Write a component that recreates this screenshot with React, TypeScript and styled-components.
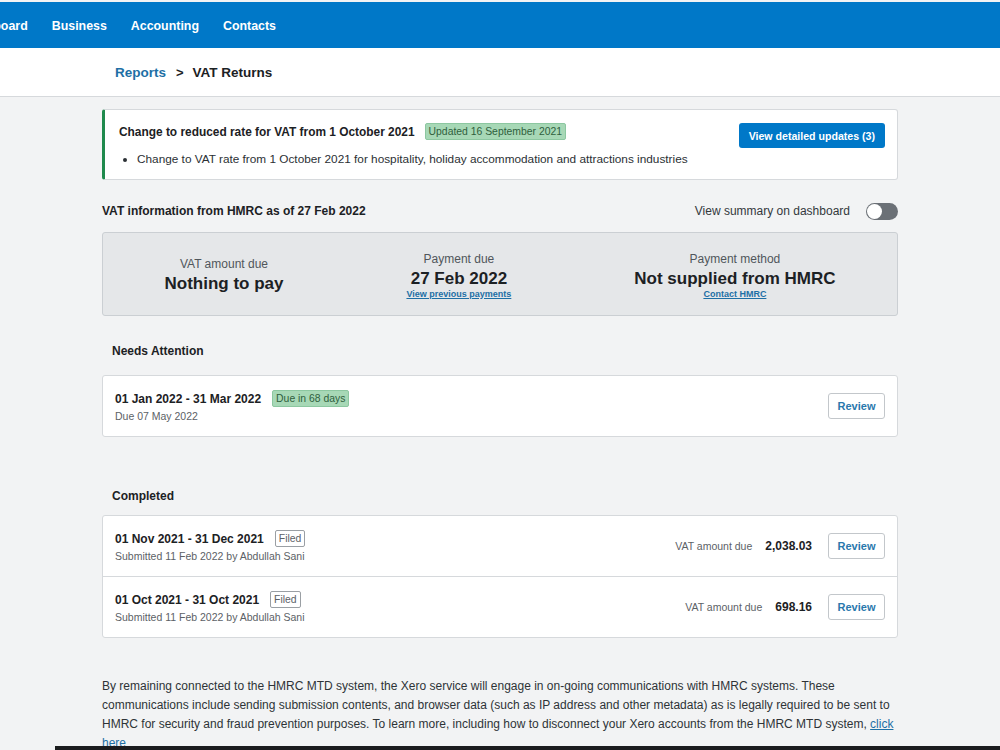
import React from 'react';
import styled, { createGlobalStyle } from 'styled-components';

const GlobalStyle = createGlobalStyle`
  html, body {
    margin: 0;
    padding: 0;
    background: #f2f3f4;
    font-family: "Liberation Sans", Arial, sans-serif;
    color: #1c2124;
    overflow: hidden;
  }
`;

const S = {
  Page: styled.div`
    min-height: 750px;
    padding-top: 2px;
    background: #f2f3f4;
  `,
  Nav: styled.nav`
    display: flex;
    align-items: center;
    gap: 24px;
    height: 46px;
    margin-left: -37px;
    background: #0078c8;
  `,
  NavItem: styled.a`
    color: #ffffff;
    font-size: 12.4px;
    font-weight: 700;
    text-decoration: none;
    padding-top: 1px;
  `,
  Crumbs: styled.div`
    display: flex;
    align-items: center;
    height: 48px;
    padding-left: 115px;
    background: #ffffff;
    border-bottom: 1px solid #d6d9dc;
    font-size: 13.5px;
    font-weight: 700;

    .link {
      color: #1d6fa5;
    }
    .sep {
      margin: 0 9px 0 10px;
      font-size: 13px;
    }
  `,
  Main: styled.main`
    width: 796px;
    margin: 0 auto;
    padding-top: 12px;
  `,
  Notice: styled.section`
    display: flex;
    justify-content: space-between;
    align-items: flex-start;
    background: #ffffff;
    border: 1px solid #d6d9dc;
    border-left: 3px solid #1f8a4d;
    border-radius: 3px;
    padding: 13px 12px 13px 14px;
  `,
  NoticeTitle: styled.div`
    display: flex;
    align-items: center;
    gap: 10px;
    font-size: 11.9px;
    font-weight: 700;
  `,
  NoticeList: styled.ul`
    margin: 12px 0 0;
    padding-left: 18px;
    font-size: 11.8px;
    color: #2b3034;
  `,
  Tag: styled.span<{ $outline?: boolean }>`
    display: inline-block;
    font-size: 10.4px;
    font-weight: 400;
    line-height: 13px;
    padding: 1px 3px;
    border-radius: 2px;
    color: ${(p) => (p.$outline ? '#5c6166' : '#2f5f3d')};
    background: ${(p) => (p.$outline ? '#ffffff' : '#a7d8b6')};
    border: 1px solid ${(p) => (p.$outline ? '#9a9fa4' : '#8cc7a0')};
  `,
  PrimaryButton: styled.button`
    background: #0078c8;
    color: #ffffff;
    border: none;
    border-radius: 3px;
    font-family: inherit;
    font-size: 10.6px;
    font-weight: 700;
    height: 25px;
    padding: 0 10px;
  `,
  InfoHeader: styled.div`
    display: flex;
    justify-content: space-between;
    align-items: center;
    margin-top: 21px;
    height: 20px;
    font-size: 12px;
    font-weight: 700;
  `,
  ToggleWrap: styled.label`
    display: flex;
    align-items: center;
    gap: 16px;
    font-size: 12px;
    font-weight: 400;
    color: #33383c;
  `,
  Toggle: styled.span`
    position: relative;
    width: 32px;
    height: 17px;
    border-radius: 9px;
    background: #6b7076;

    &::after {
      content: '';
      position: absolute;
      top: 1px;
      left: 1px;
      width: 15px;
      height: 15px;
      border-radius: 50%;
      background: #ffffff;
    }
  `,
  Summary: styled.div`
    box-sizing: border-box;
    display: flex;
    justify-content: space-around;
    align-items: center;
    height: 84px;
    padding-top: 3px;
    margin-top: 11px;
    background: #e5e7e9;
    border: 1px solid #cbcfd3;
    border-radius: 3px;
  `,
  Stat: styled.div`
    display: flex;
    flex-direction: column;
    align-items: center;
  `,
  StatLabel: styled.div`
    font-size: 12px;
    color: #50565b;
    line-height: 14px;
  `,
  StatValue: styled.div`
    font-size: 17px;
    font-weight: 700;
    line-height: 20px;
    margin-top: 3px;
  `,
  StatLink: styled.a`
    font-size: 9px;
    font-weight: 700;
    color: #1d6fa5;
    text-decoration: underline;
    line-height: 11px;
  `,
  SectionTitle: styled.h3<{ $top: number }>`
    margin: ${(p) => p.$top}px 0 0 10px;
    font-size: 12px;
    font-weight: 700;
    line-height: 14px;
  `,
  Card: styled.div<{ $top: number }>`
    margin-top: ${(p) => p.$top}px;
    background: #ffffff;
    border: 1px solid #d6d9dc;
    border-radius: 3px;
  `,
  Row: styled.div`
    display: flex;
    align-items: center;
    height: 60px;
    padding: 0 12px;

    & + & {
      border-top: 1px solid #d6d9dc;
    }
  `,
  RowMain: styled.div`
    flex: 1;
  `,
  RowTitle: styled.div`
    display: flex;
    align-items: center;
    gap: 11px;
    font-size: 12px;
    font-weight: 700;
  `,
  RowSub: styled.div`
    margin-top: 3px;
    font-size: 10.5px;
    color: #5c6166;
  `,
  Amount: styled.div`
    display: flex;
    align-items: center;
    gap: 13px;
    margin-right: 16px;
    font-size: 10.5px;
    color: #5c6166;

    strong {
      font-size: 12px;
      color: #1c2124;
    }
  `,
  ReviewButton: styled.button`
    width: 57px;
    height: 26px;
    background: #ffffff;
    border: 1px solid #c3c7cb;
    border-radius: 3px;
    font-family: inherit;
    font-size: 11px;
    font-weight: 700;
    color: #2a78ad;
  `,
  Disclaimer: styled.p`
    margin: 39px 0 0;
    font-size: 12px;
    line-height: 19px;
    color: #2e3337;

    a {
      color: #1d6fa5;
      text-decoration: underline;
    }
  `,
  Taskbar: styled.div`
    position: fixed;
    left: 55px;
    right: 0;
    bottom: 0;
    height: 4px;
    background: #1b1c1e;
  `,
};

interface IReturn {
  period: string;
  submitted: string;
  amount: string;
}

const completed: IReturn[] = [
  { period: '01 Nov 2021 - 31 Dec 2021', submitted: 'Submitted 11 Feb 2022 by Abdullah Sani', amount: '2,038.03' },
  { period: '01 Oct 2021 - 31 Oct 2021', submitted: 'Submitted 11 Feb 2022 by Abdullah Sani', amount: '698.16' },
];

function App() {
  return (
    <>
      <GlobalStyle />
      <S.Page>
        <S.Nav>
          <S.NavItem>Dashboard</S.NavItem>
          <S.NavItem>Business</S.NavItem>
          <S.NavItem>Accounting</S.NavItem>
          <S.NavItem>Contacts</S.NavItem>
        </S.Nav>
        <S.Crumbs>
          <span className="link">Reports</span>
          <span className="sep">&gt;</span>
          <span>VAT Returns</span>
        </S.Crumbs>

        <S.Main>
          <S.Notice>
            <div>
              <S.NoticeTitle>
                Change to reduced rate for VAT from 1 October 2021
                <S.Tag>Updated 16 September 2021</S.Tag>
              </S.NoticeTitle>
              <S.NoticeList>
                <li>Change to VAT rate from 1 October 2021 for hospitality, holiday accommodation and attractions industries</li>
              </S.NoticeList>
            </div>
            <S.PrimaryButton>View detailed updates (3)</S.PrimaryButton>
          </S.Notice>

          <S.InfoHeader>
            VAT information from HMRC as of 27 Feb 2022
            <S.ToggleWrap>
              View summary on dashboard
              <S.Toggle />
            </S.ToggleWrap>
          </S.InfoHeader>

          <S.Summary>
            <S.Stat>
              <S.StatLabel>VAT amount due</S.StatLabel>
              <S.StatValue>Nothing to pay</S.StatValue>
            </S.Stat>
            <S.Stat>
              <S.StatLabel>Payment due</S.StatLabel>
              <S.StatValue>27 Feb 2022</S.StatValue>
              <S.StatLink>View previous payments</S.StatLink>
            </S.Stat>
            <S.Stat>
              <S.StatLabel>Payment method</S.StatLabel>
              <S.StatValue>Not supplied from HMRC</S.StatValue>
              <S.StatLink>Contact HMRC</S.StatLink>
            </S.Stat>
          </S.Summary>

          <S.SectionTitle $top={28}>Needs Attention</S.SectionTitle>
          <S.Card $top={17}>
            <S.Row>
              <S.RowMain>
                <S.RowTitle>
                  01 Jan 2022 - 31 Mar 2022
                  <S.Tag>Due in 68 days</S.Tag>
                </S.RowTitle>
                <S.RowSub>Due 07 May 2022</S.RowSub>
              </S.RowMain>
              <S.ReviewButton>Review</S.ReviewButton>
            </S.Row>
          </S.Card>

          <S.SectionTitle $top={52}>Completed</S.SectionTitle>
          <S.Card $top={12}>
            {completed.map((r) => (
              <S.Row key={r.period}>
                <S.RowMain>
                  <S.RowTitle>
                    {r.period}
                    <S.Tag $outline>Filed</S.Tag>
                  </S.RowTitle>
                  <S.RowSub>{r.submitted}</S.RowSub>
                </S.RowMain>
                <S.Amount>
                  VAT amount due <strong>{r.amount}</strong>
                </S.Amount>
                <S.ReviewButton>Review</S.ReviewButton>
              </S.Row>
            ))}
          </S.Card>

          <S.Disclaimer>
            By remaining connected to the HMRC MTD system, the Xero service will engage in on-going communications with
            HMRC systems. These communications include sending submission contents, and browser data (such as IP address
            and other metadata) as is legally required to be sent to HMRC for security and fraud prevention purposes. To
            learn more, including how to disconnect your Xero accounts from the HMRC MTD system, <a>click here</a>
          </S.Disclaimer>
        </S.Main>
        <S.Taskbar />
      </S.Page>
    </>
  );
}

export default App;
